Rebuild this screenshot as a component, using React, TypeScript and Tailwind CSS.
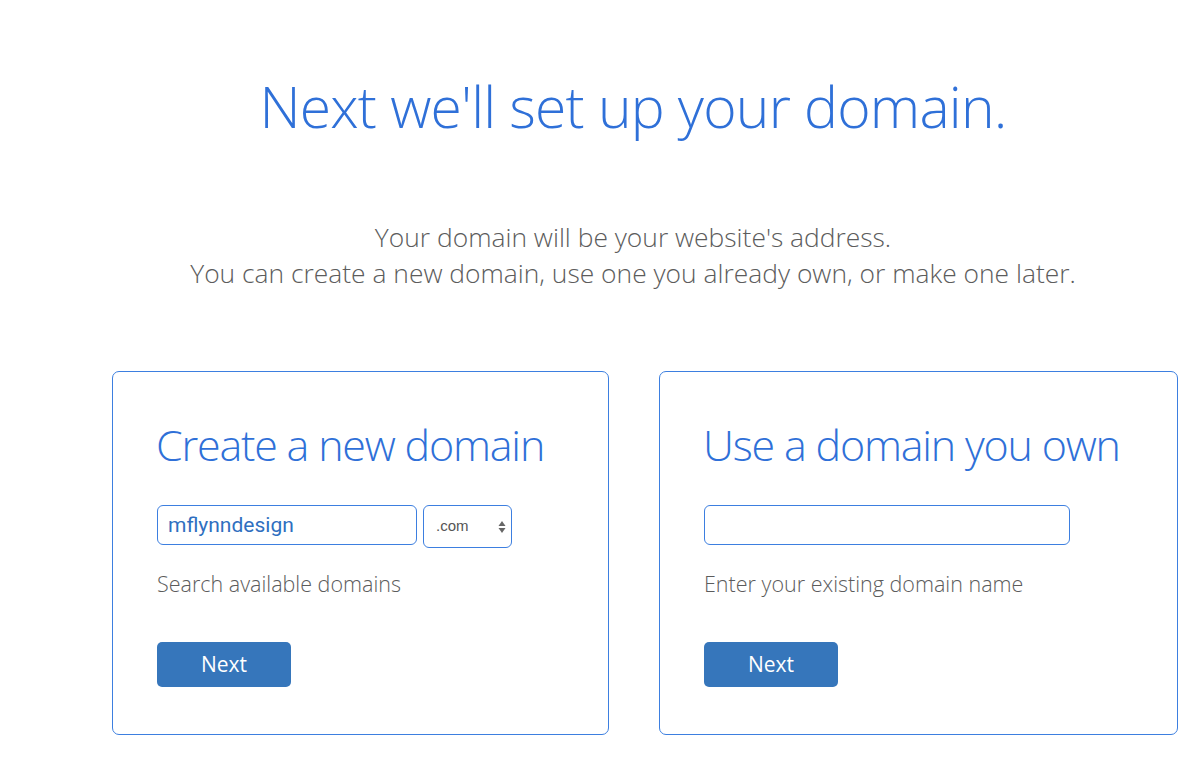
import { useState } from "react";

const openSans = { fontFamily: "'Open Sans', 'Noto Sans', sans-serif" };

const DomainCard = ({
    title,
    hint,
    width,
    children,
}: {
    title: string;
    hint: string;
    width: string;
    children: React.ReactNode;
}) => (
    <div className={`${width} h-[364px] border border-[#3d7fe0] rounded-[7px] px-[44px] pt-[45px]`}>
        <h2 className="whitespace-nowrap text-[43px] leading-[56px] font-light text-[#2f70d8] tracking-[-1.2px] -ml-[1px]">
            {title}
        </h2>
        <div className="mt-[32px] h-[40px] flex items-start gap-[6px]">{children}</div>
        <p className="mt-[24px] text-[21.5px] leading-[30px] font-light text-[#5c5c5c]">{hint}</p>
        <button className="mt-[43px] w-[134px] h-[45px] rounded-[5px] bg-[#3676bb] text-white text-[21px] font-normal">
            Next
        </button>
    </div>
);

export default function App() {
    const [domain, setDomain] = useState("mflynndesign");
    const [own, setOwn] = useState("");

    return (
        <div className="w-[1200px] h-[759px] bg-white overflow-hidden" style={openSans}>
            <h1 className="pt-[66px] text-center text-[57px] leading-[80px] font-light tracking-[-0.8px] text-[#2f70d8] pl-[66px]">
                Next we'll set up your domain.
            </h1>

            <div className="mt-[73px] text-center text-[26.4px] leading-[36px] font-light text-[#5c5c5c] pl-[66px]">
                <p>Your domain will be your website's address.</p>
                <p>You can create a new domain, use one you already own, or make one later.</p>
            </div>

            <div className="mt-[80px] pl-[112px] flex gap-[50px]">
                <DomainCard title="Create a new domain" hint="Search available domains" width="w-[497px]">
                    <input
                        value={domain}
                        onChange={(e) => setDomain(e.target.value)}
                        className="w-[260px] h-[40px] border border-[#3d7fe0] rounded-[6px] px-[10px] text-[21px] font-normal text-[#2f6fc0] outline-none"
                        style={{ fontFamily: "Roboto, 'Liberation Sans', Arial, sans-serif" }}
                    />
                    <div className="shrink-0 w-[89px] h-[43px] border border-[#3d7fe0] rounded-[6px] flex items-center justify-between pl-[12px] pr-[5px]">
                        <span
                            className="text-[15px] text-[#555]"
                            style={{ fontFamily: "'Liberation Sans', Arial, sans-serif" }}
                        >
                            .com
                        </span>
                        <svg width="8" height="14" viewBox="0 0 8 14">
                            <path d="M4 1 L7.5 6 H0.5 Z" fill="#666" />
                            <path d="M4 13 L7.5 8 H0.5 Z" fill="#666" />
                        </svg>
                    </div>
                </DomainCard>

                <DomainCard title="Use a domain you own" hint="Enter your existing domain name" width="w-[519px]">
                    <input
                        value={own}
                        onChange={(e) => setOwn(e.target.value)}
                        className="w-[366px] h-[40px] border border-[#3d7fe0] rounded-[6px] px-[10px] text-[20px] outline-none"
                    />
                </DomainCard>
            </div>
        </div>
    );
}
